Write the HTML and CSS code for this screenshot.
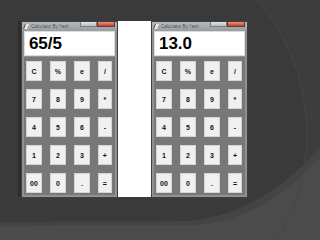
FILE: index.html
```html
<!DOCTYPE html>
<html>
<head>
<meta charset="utf-8">
<link rel="stylesheet" href="styles.css">
</head>
<body>
<svg class="bg" width="320" height="240" viewBox="0 0 320 240">
  <rect width="320" height="240" fill="#3a3a3a"/>
  <path d="M257 0 A205 205 0 0 1 277 240 L320 240 L320 0 Z" fill="#3d3d3d"/>
  <path d="M0 222 L190 221 Q260 214 320 148 L320 240 L0 240 Z" fill="#444444"/>
  <path d="M0 226 L200 225 Q265 218 320 158 L320 240 L0 240 Z" fill="#4b4b4b"/>
  <path d="M257 0 A205 205 0 0 1 277 240" fill="none" stroke="#464646" stroke-width="1"/>
</svg>
<div class="slide">
  <div class="shot">
    <div class="edge"></div>
    <div class="win">
      <div class="title">
        <span class="ico"></span>
        <span class="ttext">Calculator By Yash</span>
        <span class="ctrls"><span class="mm"></span><span class="cls"></span></span>
      </div>
      <div class="display">65/5</div>
      <div class="pad">
        <span class="k">C</span><span class="k">%</span><span class="k">e</span><span class="k">/</span>
        <span class="k">7</span><span class="k">8</span><span class="k">9</span><span class="k">*</span>
        <span class="k">4</span><span class="k">5</span><span class="k">6</span><span class="k">-</span>
        <span class="k">1</span><span class="k">2</span><span class="k">3</span><span class="k">+</span>
        <span class="k">00</span><span class="k">0</span><span class="k">.</span><span class="k">=</span>
      </div>
    </div>
    <div class="gap"></div>
    <div class="win">
      <div class="title">
        <span class="ico"></span>
        <span class="ttext">Calculator By Yash</span>
        <span class="ctrls"><span class="mm"></span><span class="cls"></span></span>
      </div>
      <div class="display">13.0</div>
      <div class="pad">
        <span class="k">C</span><span class="k">%</span><span class="k">e</span><span class="k">/</span>
        <span class="k">7</span><span class="k">8</span><span class="k">9</span><span class="k">*</span>
        <span class="k">4</span><span class="k">5</span><span class="k">6</span><span class="k">-</span>
        <span class="k">1</span><span class="k">2</span><span class="k">3</span><span class="k">+</span>
        <span class="k">00</span><span class="k">0</span><span class="k">.</span><span class="k">=</span>
      </div>
    </div>
  </div>
</div>
</body>
</html>
```

FILE: styles.css
```css
html, body {
  margin: 0;
  padding: 0;
  width: 320px;
  height: 240px;
  overflow: hidden;
  background: #3a3a3a;
  font-family: "Liberation Sans", Arial, sans-serif;
}
.bg {
  position: absolute;
  left: 0;
  top: 0;
  z-index: 0;
}
.slide {
  position: relative;
  z-index: 1;
  padding: 21px 0 0 18px;
}
.shot {
  display: flex;
  height: 176px;
  width: 230px;
  background: #ffffff;
}
.edge {
  width: 3px;
  background: #2e2e2e;
}
.gap {
  width: 34px;
  background: #ffffff;
}
.win {
  width: 94px;
  border: 1px solid #3c3f43;
  background: #8e9297;
  display: flex;
  flex-direction: column;
  padding: 0 2px 2px 2px;
  box-sizing: content-box;
  height: 173px;
}
.title {
  height: 9px;
  display: flex;
  align-items: center;
  background: linear-gradient(#b4b8bc, #989ca1);
  margin: 0 -2px;
  padding: 0 2px 0 2px;
}
.ico {
  width: 3px;
  height: 5px;
  background: #e8e8e8;
  border-left: 1px solid #444;
  transform: skewX(-20deg);
  margin-right: 3px;
}
.ttext {
  font-size: 4.5px;
  color: #2b2b2b;
  white-space: nowrap;
  text-shadow: 0 0 1px #fff;
  flex: 1;
}
.ctrls {
  display: flex;
  height: 5px;
  align-self: flex-start;
}
.mm {
  width: 15px;
  background: linear-gradient(#e2e4e6, #b8bcc0);
  border: 1px solid #7a7e82;
  border-top: 0;
}
.cls {
  width: 16px;
  background: linear-gradient(#ec8e7e, #c8402c);
  border: 1px solid #6a3a32;
  border-top: 0;
}
.display {
  height: 23px;
  background: #ffffff;
  border: 1px solid #dcdcdc;
  font-weight: bold;
  font-size: 17px;
  line-height: 24px;
  padding-left: 4px;
  color: #000;
}
.pad {
  flex: 1;
  margin-top: 1px;
  background: #787878;
  display: grid;
  grid-template-columns: 16px 16px 16px 14px;
  grid-auto-rows: 20px;
  column-gap: 8px;
  row-gap: 8px;
  padding: 4px 0 0 2px;
  opacity: 0.999;
}
.k {
  display: flex;
  align-items: center;
  justify-content: center;
  border: 1px solid #d4d4d4;
  background: #f0f0f0;
  font-weight: bold;
  font-size: 7px;
  color: #111;
}
```
